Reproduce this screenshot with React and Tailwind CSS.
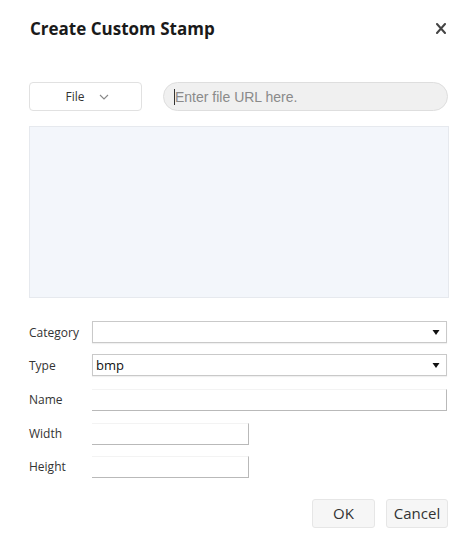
import React from "react";

const Arrow = () => (
  <svg width="8" height="7" viewBox="0 0 8 7" className="shrink-0">
    <path d="M0.5 1 L7.5 1 L4 6 Z" fill="#111" />
  </svg>
);

const SelectRow = ({ label, value, className = "" }) => (
  <div className={`flex items-center h-[22px] ${className}`}>
    <span className="w-[63px] text-[12px] text-[#333] pt-[2px]">{label}</span>
    <div className="flex-1 h-[22px] flex items-center justify-between border border-[#c9c9c9] pl-[3px] pr-[6px] mr-[2px] shadow-[0_1px_1px_rgba(0,0,0,0.06)]">
      <span className="text-[13px] text-[#111] leading-none">{value}</span>
      <Arrow />
    </div>
  </div>
);

const InputRow = ({ label, short, className = "" }) => (
  <div className={`flex items-center h-[22px] ${className}`}>
    <span className="w-[63px] text-[12px] text-[#333]">{label}</span>
    <div
      className={`h-[22px] border-b border-r border-t border-[#b9b9b9] border-t-[#f3f3f3] ${
        short ? "w-[157px]" : "flex-1 mr-[2px]"
      }`}
    ></div>
  </div>
);

export default function App() {
  return (
    <div
      className="w-[474px] h-[540px] bg-white pl-[29px] pr-[25px] flex flex-col"
      style={{ fontFamily: '"Open Sans", "Noto Sans", sans-serif' }}
    >
      <div className="flex items-center justify-between pt-[15px] h-[42px]">
        <h1 className="text-[17px] font-bold text-[#1a1a1a] leading-none pl-[1px]">Create Custom Stamp</h1>
        <svg width="10" height="11" viewBox="0 0 10 11" className="mr-[3px] mb-[1px]">
          <path d="M1 1 L9 10 M9 1 L1 10" stroke="#444" strokeWidth="2" strokeLinecap="round" />
        </svg>
      </div>

      <div className="flex items-center gap-[21px] mt-[40px] h-[29px]">
        <button className="w-[113px] h-[29px] border border-[#e1e1e1] rounded-[4px] flex items-center justify-center gap-[14px] text-[12px] text-[#333] pl-[3px]">
          File
          <svg width="10" height="6" viewBox="0 0 10 6">
            <path d="M1 1 L5 5 L9 1" fill="none" stroke="#888" strokeWidth="1.1" />
          </svg>
        </button>
        <div className="flex-1 h-[29px] mr-[1px] rounded-full border border-[#dedede] bg-[#f0f0f0] flex items-center pl-[10px]">
          <span className="w-px h-[16px] bg-[#333]"></span>
          <span
            className="text-[14px] text-[#8a8a8a] leading-none"
            style={{ fontFamily: '"Liberation Sans", Arial, sans-serif' }}
          >
            Enter file URL here.
          </span>
        </div>
      </div>

      <div className="mt-[15px] h-[172px] bg-[#f3f6fb] border border-[#e6e9ee]"></div>

      <div className="flex flex-col mt-[23px]">
        <SelectRow label="Category" value="" />
        <SelectRow label="Type" value="bmp" className="mt-[11px]" />
        <InputRow label="Name" className="mt-[13px]" />
        <InputRow label="Width" short className="mt-[12px]" />
        <InputRow label="Height" short className="mt-[11px]" />
      </div>

      <div className="flex justify-end gap-[11px] mt-[21px] mr-[1px]">
        <button className="w-[63px] h-[29px] bg-[#f6f6f6] border border-[#e6e6e6] rounded-[3px] text-[15px] text-[#333]">OK</button>
        <button className="w-[62px] h-[29px] bg-[#f6f6f6] border border-[#e6e6e6] rounded-[3px] text-[15px] text-[#333]">Cancel</button>
      </div>
    </div>
  );
}
